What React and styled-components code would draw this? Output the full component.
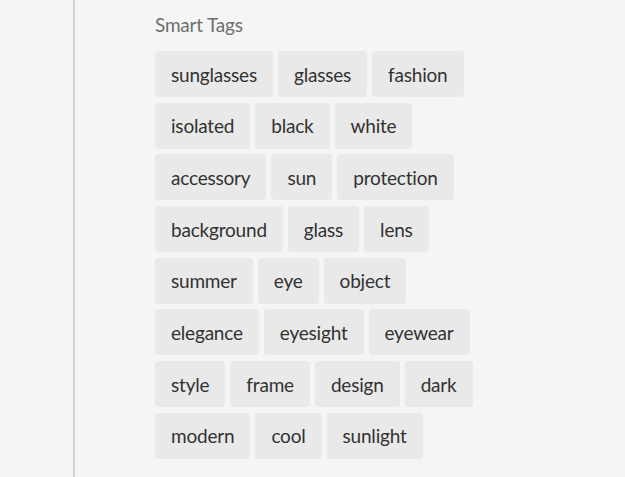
import { createGlobalStyle, styled } from "styled-components";

const GlobalStyle = createGlobalStyle`
  html, body {
    margin: 0;
    padding: 0;
    background: #f5f5f5;
  }
  body {
    font-family: "Lato", "Open Sans", sans-serif;
  }
`;

const rows = [
  ["sunglasses", "glasses", "fashion"],
  ["isolated", "black", "white"],
  ["accessory", "sun", "protection"],
  ["background", "glass", "lens"],
  ["summer", "eye", "object"],
  ["elegance", "eyesight", "eyewear"],
  ["style", "frame", "design", "dark"],
  ["modern", "cool", "sunlight"],
];

const App = () => {
  return (
    <>
      <GlobalStyle />
      <Page>
        <Rail />
        <Panel>
          <Title>Smart Tags</Title>
          <TagList>
            {rows.map((row, i) => (
              <TagRow key={i}>
                {row.map((tag) => (
                  <Tag key={tag}>{tag}</Tag>
                ))}
              </TagRow>
            ))}
          </TagList>
        </Panel>
      </Page>
    </>
  );
};

const Page = styled.div`
  display: flex;
  min-height: 477px;
  background: #f5f5f5;
`;

const Rail = styled.div`
  width: 73px;
  flex-shrink: 0;
  border-right: 2px solid #d3d3d3;
`;

const Panel = styled.section`
  display: flex;
  flex-direction: column;
  padding: 13px 0 0 80px;
`;

const Title = styled.h2`
  margin: 0 0 14px;
  font-size: 19px;
  line-height: 24px;
  font-weight: 400;
  letter-spacing: -0.2px;
  color: #6e6e6e;
`;

const TagList = styled.div`
  display: flex;
  flex-direction: column;
  gap: 5.7px;
`;

const TagRow = styled.div`
  display: flex;
  gap: 5px;
`;

const Tag = styled.span`
  display: flex;
  align-items: center;
  height: 46px;
  padding: 0 16px;
  border-radius: 4px;
  background: #e9e9e9;
  color: #323232;
  font-size: 19px;
  letter-spacing: -0.2px;
`;

export default App;
